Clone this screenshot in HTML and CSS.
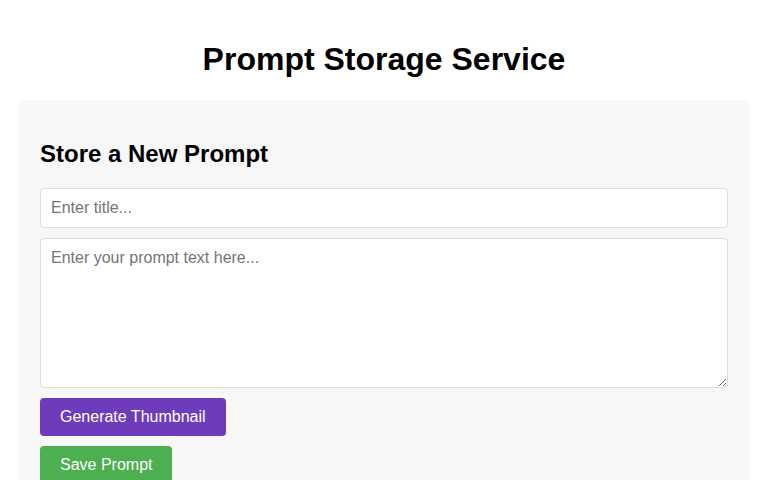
FILE: index.html
```html
<!DOCTYPE html>
<html lang="en">
<head>
<meta charset="utf-8">
<title>Prompt Storage Service</title>
<link rel="stylesheet" href="styles.css">
</head>
<body>
<h1 class="page-title">Prompt Storage Service</h1>
<section class="card">
  <h2 class="card-title">Store a New Prompt</h2>
  <input class="field" type="text" placeholder="Enter title...">
  <textarea class="field area" placeholder="Enter your prompt text here..."></textarea>
  <button class="btn btn-purple">Generate Thumbnail</button>
  <button class="btn btn-green">Save Prompt</button>
</section>
</body>
</html>
```
FILE: styles.css
```css
html, body {
  margin: 0;
  background: #ffffff;
}
body {
  padding: 20px 18px;
  font-family: "Liberation Sans", Arial, sans-serif;
  color: #000;
}
.page-title {
  text-align: center;
  font-size: 32px;
  font-weight: bold;
  margin: 21.44px 0;
}
.card {
  background: #f7f7f7;
  border-radius: 10px;
  padding: 20px 22px;
}
.card-title {
  font-size: 24px;
  font-weight: bold;
  margin: 20px 0;
}
.field {
  display: block;
  box-sizing: border-box;
  width: 100%;
  height: 40px;
  margin: 0 0 10px;
  padding: 10px;
  border: 1px solid #dddddd;
  border-radius: 4px;
  background: #fff;
  font-family: "Liberation Sans", Arial, sans-serif;
  font-size: 16px;
  color: #333;
}
.field::placeholder {
  color: #757575;
}
.area {
  height: 150px;
  resize: vertical;
}
.btn {
  display: block;
  margin: 0 0 10px;
  padding: 10px 20px;
  border: none;
  border-radius: 4px;
  color: #fff;
  font-family: "Liberation Sans", Arial, sans-serif;
  font-size: 16px;
  cursor: pointer;
}
.btn-purple {
  background: #6f3bbd;
}
.btn-green {
  background: #4caf50;
}
```
